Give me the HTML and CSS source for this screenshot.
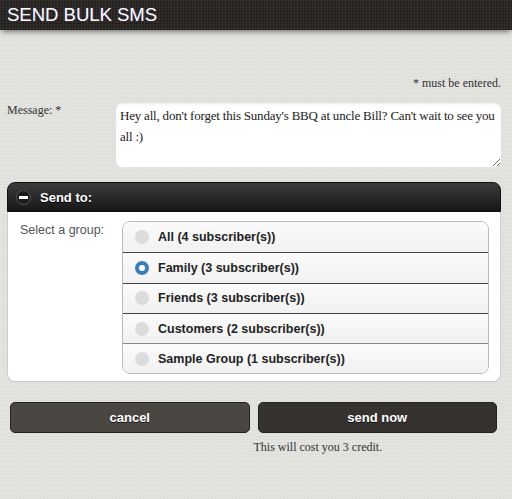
FILE: index.html
```html
<!DOCTYPE html>
<html lang="en">
<head>
    <meta charset="UTF-8">
    <meta name="viewport" content="width=device-width, initial-scale=1.0">
    <title>Send Bulk SMS</title>
    <link rel="stylesheet" href="styles.css">
</head>
<body>
    <div class="header">
        <h1>SEND BULK SMS</h1>
    </div>
    <div class="content">
        <p class="required-note">* must be entered.</p>
        <div class="field">
            <label for="message" class="field-label">Message: *</label>
            <textarea id="message" name="message">Hey all, don't forget this Sunday's BBQ at uncle Bill? Can't wait to see you all :)</textarea>
        </div>
        <div class="collapsible">
            <div class="collapsible-head">
                <span class="minus-icon"></span>
                <span>Send to:</span>
            </div>
            <div class="collapsible-body">
                <div class="group-label">Select a group:</div>
                <div class="radio-list">
                    <label class="radio-row"><span class="radio"></span>All (4 subscriber(s))</label>
                    <label class="radio-row"><span class="radio checked"></span>Family (3 subscriber(s))</label>
                    <label class="radio-row"><span class="radio"></span>Friends (3 subscriber(s))</label>
                    <label class="radio-row"><span class="radio"></span>Customers (2 subscriber(s))</label>
                    <label class="radio-row"><span class="radio"></span>Sample Group (1 subscriber(s))</label>
                </div>
            </div>
        </div>
        <div class="actions">
            <div class="action-col">
                <button class="btn btn-cancel">cancel</button>
            </div>
            <div class="action-col">
                <button class="btn btn-send">send now</button>
                <p class="cost">This will cost you 3 credit.</p>
            </div>
        </div>
    </div>
</body>
</html>
```

FILE: styles.css
```css
* {
    margin: 0;
    padding: 0;
    box-sizing: border-box;
}
body {
    background-color: #e2e2de;
    background-image: repeating-linear-gradient(90deg, rgba(255,255,255,0.08) 0 1px, transparent 1px 3px),
                      repeating-linear-gradient(0deg, rgba(0,0,0,0.025) 0 1px, transparent 1px 3px);
    font-family: "Liberation Serif", serif;
    color: #333;
    font-size: 12px;
}
.header {
    height: 30px;
    background-color: #2a2724;
    background-image: repeating-linear-gradient(90deg, rgba(255,255,255,0.05) 0 1px, transparent 1px 3px),
                      repeating-linear-gradient(0deg, rgba(0,0,0,0.25) 0 1px, transparent 1px 3px);
    padding-left: 7px;
    box-shadow: 0 4px 5px -2px rgba(0, 0, 0, 0.45);
}
.header h1 {
    font-family: "Liberation Sans", Arial, sans-serif;
    font-weight: normal;
    font-size: 18.5px;
    line-height: 30px;
    color: #fff;
    text-shadow: 1px 0 0 rgba(90, 60, 160, 0.6);
}
.content {
    padding: 0 10px 0 7px;
}
.required-note {
    text-align: right;
    margin-top: 45px;
    line-height: 16px;
    padding-right: 1px;
}
.field {
    display: flex;
    margin-top: 12px;
}
.field-label {
    width: 109px;
    line-height: 14px;
}
textarea {
    flex: 1;
    height: 64px;
    border: none;
    border-radius: 6px;
    background: #fff;
    padding: 2px 4px;
    font-family: "Liberation Serif", serif;
    font-size: 13px;
    letter-spacing: -0.2px;
    line-height: 21px;
    color: #222;
    margin-right: 1px;
    resize: vertical;
    box-shadow: inset 0 1px 2px rgba(0, 0, 0, 0.08);
}
.collapsible {
    margin-top: 15px;
    margin-right: 1px;
    font-family: "Liberation Sans", Arial, sans-serif;
}
.collapsible-head {
    display: flex;
    align-items: center;
    height: 30px;
    padding-left: 8px;
    background: linear-gradient(#3c3c3c, #161616);
    border: 1px solid #111;
    border-radius: 8px 8px 0 0;
    color: #fff;
    font-weight: bold;
    font-size: 13px;
    text-shadow: 0 1px 0 #000;
}
.minus-icon {
    width: 15px;
    height: 15px;
    border-radius: 50%;
    background: #1c1c1c;
    border: 1px solid #555;
    position: relative;
    margin-right: 9px;
}
.minus-icon::after {
    content: "";
    position: absolute;
    left: 2px;
    right: 2px;
    top: 5px;
    height: 3px;
    background: #fff;
}
.collapsible-body {
    display: flex;
    background: #fff;
    border: 1px solid #ccc;
    border-top: none;
    border-radius: 0 0 8px 8px;
    padding: 9px 11px 7px 12px;
}
.group-label {
    width: 102px;
    font-size: 12.5px;
    color: #555;
    padding-top: 2px;
}
.radio-list {
    flex: 1;
    border: 1px solid #bbb;
    border-radius: 8px;
    overflow: hidden;
}
.radio-row {
    display: flex;
    align-items: center;
    height: 30.3px;
    padding-left: 12px;
    background: linear-gradient(#fbfbfb, #f1f1f1);
    border-top: 1px solid #444;
    font-size: 12.5px;
    font-weight: bold;
    color: #222;
}
.radio-row:first-child {
    border-top: none;
}
.radio-row:last-child {
    border-top-color: #888;
}
.radio {
    width: 14px;
    height: 14px;
    border-radius: 50%;
    background: #dcdcdc;
    margin-right: 9px;
}
.radio.checked {
    background: #fff;
    border: 4px solid #3a7fb8;
}
.actions {
    display: flex;
    gap: 8px;
    margin-top: 20px;
    padding: 0 5px 0 3px;
}
.action-col {
    flex: 1;
}
.btn {
    width: 100%;
    height: 31px;
    border: 1px solid #222;
    border-radius: 5px;
    font-family: "Liberation Sans", Arial, sans-serif;
    font-weight: bold;
    font-size: 13px;
    color: #fff;
    text-shadow: 0 1px 0 #111;
    cursor: pointer;
}
.btn-cancel {
    background: #4a4743;
}
.btn-send {
    background: #363230;
}
.cost {
    font-size: 12px;
    margin-top: 7px;
    text-indent: -4px;
}
```
